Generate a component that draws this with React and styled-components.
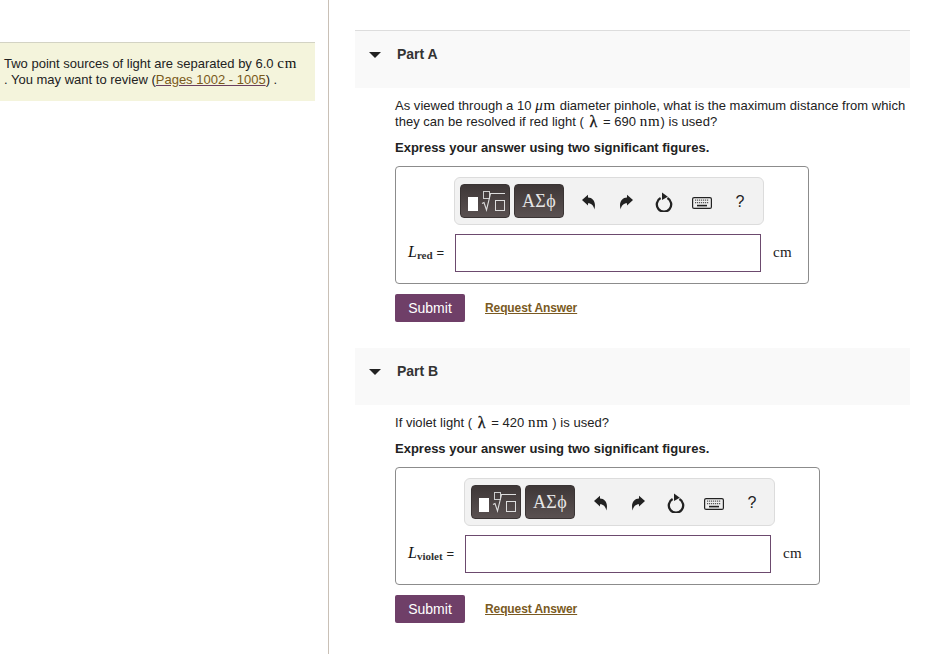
import React from "react";
import styled, { createGlobalStyle } from "styled-components";

const Global = createGlobalStyle`
  html, body { margin: 0; padding: 0; background: #fff; }
  body { font-family: "Liberation Sans", Arial, sans-serif; font-size: 13px; color: #222; overflow: hidden; }
`;
const Page = styled.div`display: flex; width: 925px; height: 654px; overflow: hidden;`;
const Side = styled.aside`width: 328px; height: 654px; border-right: 1px solid #c9c0b6; padding-top: 42px; flex: none;`;
const Note = styled.div`
  width: 315px; height: 59px; box-sizing: border-box; background: #f4f4dc; border-top: 1px solid #d3d3c4;
  padding: 13px 4px 0 4px; font-size: 13px; line-height: 16px; color: #222;
`;
const NoteLine = styled.div`white-space: nowrap;`;
const Link = styled.a`color: #7a5a1a; text-decoration: underline; text-decoration-color: #6a3f5f;`;
const Main = styled.main`margin-left: 26px; width: 555px; padding-top: 30px; flex: none;`;
const Header = styled.div`
  height: ${p => p.$h}px; box-sizing: border-box; background: #f9f9f9;
  margin-top: ${p => p.$mt || 0}px;
  border-top: ${p => p.$line ? "1px solid #ddd" : "none"};
  display: flex; align-items: flex-start; padding-top: ${p => p.$pt}px;
`;
const Caret = styled.span`
  width: 0; height: 0; margin: 6px 16px 0 14px; flex: none;
  border-left: 6px solid transparent; border-right: 6px solid transparent; border-top: 6px solid #222;
`;
const PartTitle = styled.h3`margin: 0; font-size: 14px; line-height: 16px; font-weight: 700; color: #333;`;
const Body = styled.div`padding-left: 40px;`;
const Para = styled.p`margin: ${p => p.$top}px 0 0; font-size: 13px; line-height: 16px; letter-spacing: 0.03px; white-space: nowrap; color: #222;`;
const Strong = styled(Para)`font-weight: 700; letter-spacing: 0;`;
const MathText = styled.span`font-family: "Liberation Serif", serif; font-size: 15px; line-height: 0; letter-spacing: 0.8px; color: #111;`;
const Lam = styled.span`
  font-family: "Liberation Serif", serif; font-size: 16px; line-height: 0; color: #111; -webkit-text-stroke: 0.3px #111;
  vertical-align: -1px; margin: 0 2px;
`;
const Micro = styled.i`font-family: "Liberation Serif", serif;`;
const AnswerBox = styled.div`
  display: flex; flex-direction: column; width: ${p => p.$w}px; box-sizing: border-box; margin-top: 10px;
  border: 1px solid #8c8c8c; border-radius: 4px; padding: 10px 12px 11px 12px;
`;
const Toolbar = styled.div`
  display: flex; align-items: center; height: 48px; width: ${p => p.$w}px; box-sizing: border-box;
  margin-left: ${p => p.$indent}px; padding-left: ${p => p.$pad}px;
  background: #f2f2f2; border: 1px solid #dcdcdc; border-radius: 6px;
`;
const DarkBtn = styled.div`
  width: 50px; height: 34px; margin-right: 4px; flex: none; border-radius: 4px; box-sizing: border-box;
  border: 1px solid #3a3434;
  background: linear-gradient(#3e3737, #5a5151); color: #e6e6e6; display: flex; align-items: center; justify-content: center;
  font-family: "Liberation Serif", serif; font-size: 18px; letter-spacing: 0.3px;
`;
const Tools = styled.div`display: flex; margin-left: ${p => p.$ml}px;`;
const Tool = styled.div`
  width: 38px; height: 24px; display: flex; align-items: center; justify-content: center; color: #222;
  font-family: "Liberation Sans", sans-serif; font-size: 16px; flex: none; padding-top: ${p => p.$pt || 0}px; box-sizing: border-box;
`;
const Row = styled.div`display: flex; align-items: center; margin-top: 9px;`;
const Label = styled.div`
  width: ${p => p.$w}px; flex: none; font-family: "Liberation Serif", serif; font-size: 13px; color: #111; white-space: nowrap;
  margin-top: -3px;
`;
const LVar = styled.i`font-size: 16px;`;
const Sub = styled.span`font-size: 11px; font-weight: 700; vertical-align: -2px; line-height: 0; color: #333;`;
const Eq = styled.span`font-family: "Liberation Sans", sans-serif; font-size: 13px; margin-left: 4px; color: #222;`;
const Input = styled.div`width: 306px; height: 38px; box-sizing: border-box; border: 1px solid #6c4a6e; background: #fff; flex: none;`;
const Unit = styled.div`margin-left: 12px; font-family: "Liberation Serif", serif; font-size: 15px; margin-top: -2px; letter-spacing: 0.4px; color: #222;`;
const Actions = styled.div`display: flex; align-items: center; margin-top: 10px;`;
const Submit = styled.div`
  width: 70px; height: 28px; border-radius: 2px; background: #6f3f68; color: #fff; font-size: 14px;
  display: flex; align-items: center; justify-content: center;
`;
const Request = styled.a`margin-left: 20px; font-weight: 700; font-size: 12px; color: #7a5a22; text-decoration: underline; letter-spacing: -0.1px;`;
const Mirror = styled.span`display: flex; transform: scaleX(-1);`;

const ReplyIcon = () => (
  <svg width="15" height="16" viewBox="0 0 15 16">
    <path d="M1 6 L7 0.8 V3.4 C12 3.6 15.4 8 13.4 15.4 C12.6 11.6 10.6 9.2 7 9.2 V11.6 Z" fill="#222" />
  </svg>
);
const Rotate = () => (
  <svg width="18" height="20" viewBox="0 0 18 20">
    <path d="M5.6 6 A7.2 7.2 0 1 0 12.4 6" fill="none" stroke="#222" strokeWidth="2.3" />
    <path d="M7 0.6 L12.8 4.8 L7 8 Z" fill="#222" />
  </svg>
);
const Keyboard = () => (
  <svg width="20" height="12" viewBox="0 0 20 12">
    <rect x="0.6" y="0.6" width="18.8" height="10.8" rx="1.5" fill="#eee" stroke="#222" strokeWidth="1.2" />
    <path d="M3 3.2 H17 M3 5.6 H17" stroke="#555" strokeWidth="1.3" strokeDasharray="1.2 0.8" />
    <path d="M5 8.6 H15" stroke="#222" strokeWidth="1.6" />
  </svg>
);
const Templates = () => (
  <svg width="48" height="32" viewBox="1 1 48 32">
    <rect x="8" y="13" width="10" height="14" fill="#fff" />
    <rect x="23.5" y="7.5" width="6" height="7" fill="none" stroke="#ccc" strokeWidth="1" />
    <path d="M22 19.5 L24 18.5 L26.5 26 L30.5 9.5 H45" fill="none" stroke="#ddd" strokeWidth="1.1" />
    <rect x="35.5" y="16.5" width="9" height="10" fill="none" stroke="#ddd" strokeWidth="1" />
  </svg>
);

function AnswerToolbar({ w, indent, pad, ml }) {
  return (
    <Toolbar $w={w} $indent={indent} $pad={pad}>
      <DarkBtn><Templates /></DarkBtn>
      <DarkBtn>ΑΣϕ</DarkBtn>
      <Tools $ml={ml}>
        <Tool $pt={1}><ReplyIcon /></Tool>
        <Tool $pt={1}><Mirror><ReplyIcon /></Mirror></Tool>
        <Tool $pt={2}><Rotate /></Tool>
        <Tool $pt={3}><Keyboard /></Tool>
        <Tool $pt={2}>?</Tool>
      </Tools>
    </Toolbar>
  );
}

function Answer({ boxW, tw, indent, labelW, sub, pad, ml }) {
  return (
    <>
      <AnswerBox $w={boxW}>
        <AnswerToolbar w={tw} indent={indent} pad={pad} ml={ml} />
        <Row>
          <Label $w={labelW}><LVar>L</LVar><Sub>{sub}</Sub><Eq>=</Eq></Label>
          <Input />
          <Unit>cm</Unit>
        </Row>
      </AnswerBox>
      <Actions>
        <Submit>Submit</Submit>
        <Request>Request Answer</Request>
      </Actions>
    </>
  );
}

export default function App() {
  return (
    <Page>
      <Global />
      <Side>
        <Note>
          <NoteLine>Two point sources of light are separated by 6.0 <MathText>cm</MathText></NoteLine>
          <NoteLine>. You may want to review (<Link>Pages 1002 - 1005</Link>) .</NoteLine>
        </Note>
      </Side>
      <Main>
        <Header $h={58} $line $pt={15}><Caret /><PartTitle>Part A</PartTitle></Header>
        <Body>
          <Para $top={10}>As viewed through a 10 <MathText><Micro>μ</Micro>m</MathText> diameter pinhole, what is the maximum distance from which</Para>
          <Para $top={0}>they can be resolved if red light ( <Lam>λ</Lam> = 690 <MathText>nm</MathText>) is used?</Para>
          <Strong $top={10}>Express your answer using two significant figures.</Strong>
          <Answer boxW={414} tw={310} indent={46} labelW={47} sub="red" pad={5} ml={1} />
        </Body>
        <Header $h={57} $pt={15} $mt={26}><Caret /><PartTitle>Part B</PartTitle></Header>
        <Body>
          <Para $top={10}>If violet light ( <Lam>λ</Lam> = 420 <MathText>nm</MathText> ) is used?</Para>
          <Strong $top={10}>Express your answer using two significant figures.</Strong>
          <Answer boxW={425} tw={311} indent={56} labelW={57} sub="violet" pad={6} ml={2} />
        </Body>
      </Main>
    </Page>
  );
}
